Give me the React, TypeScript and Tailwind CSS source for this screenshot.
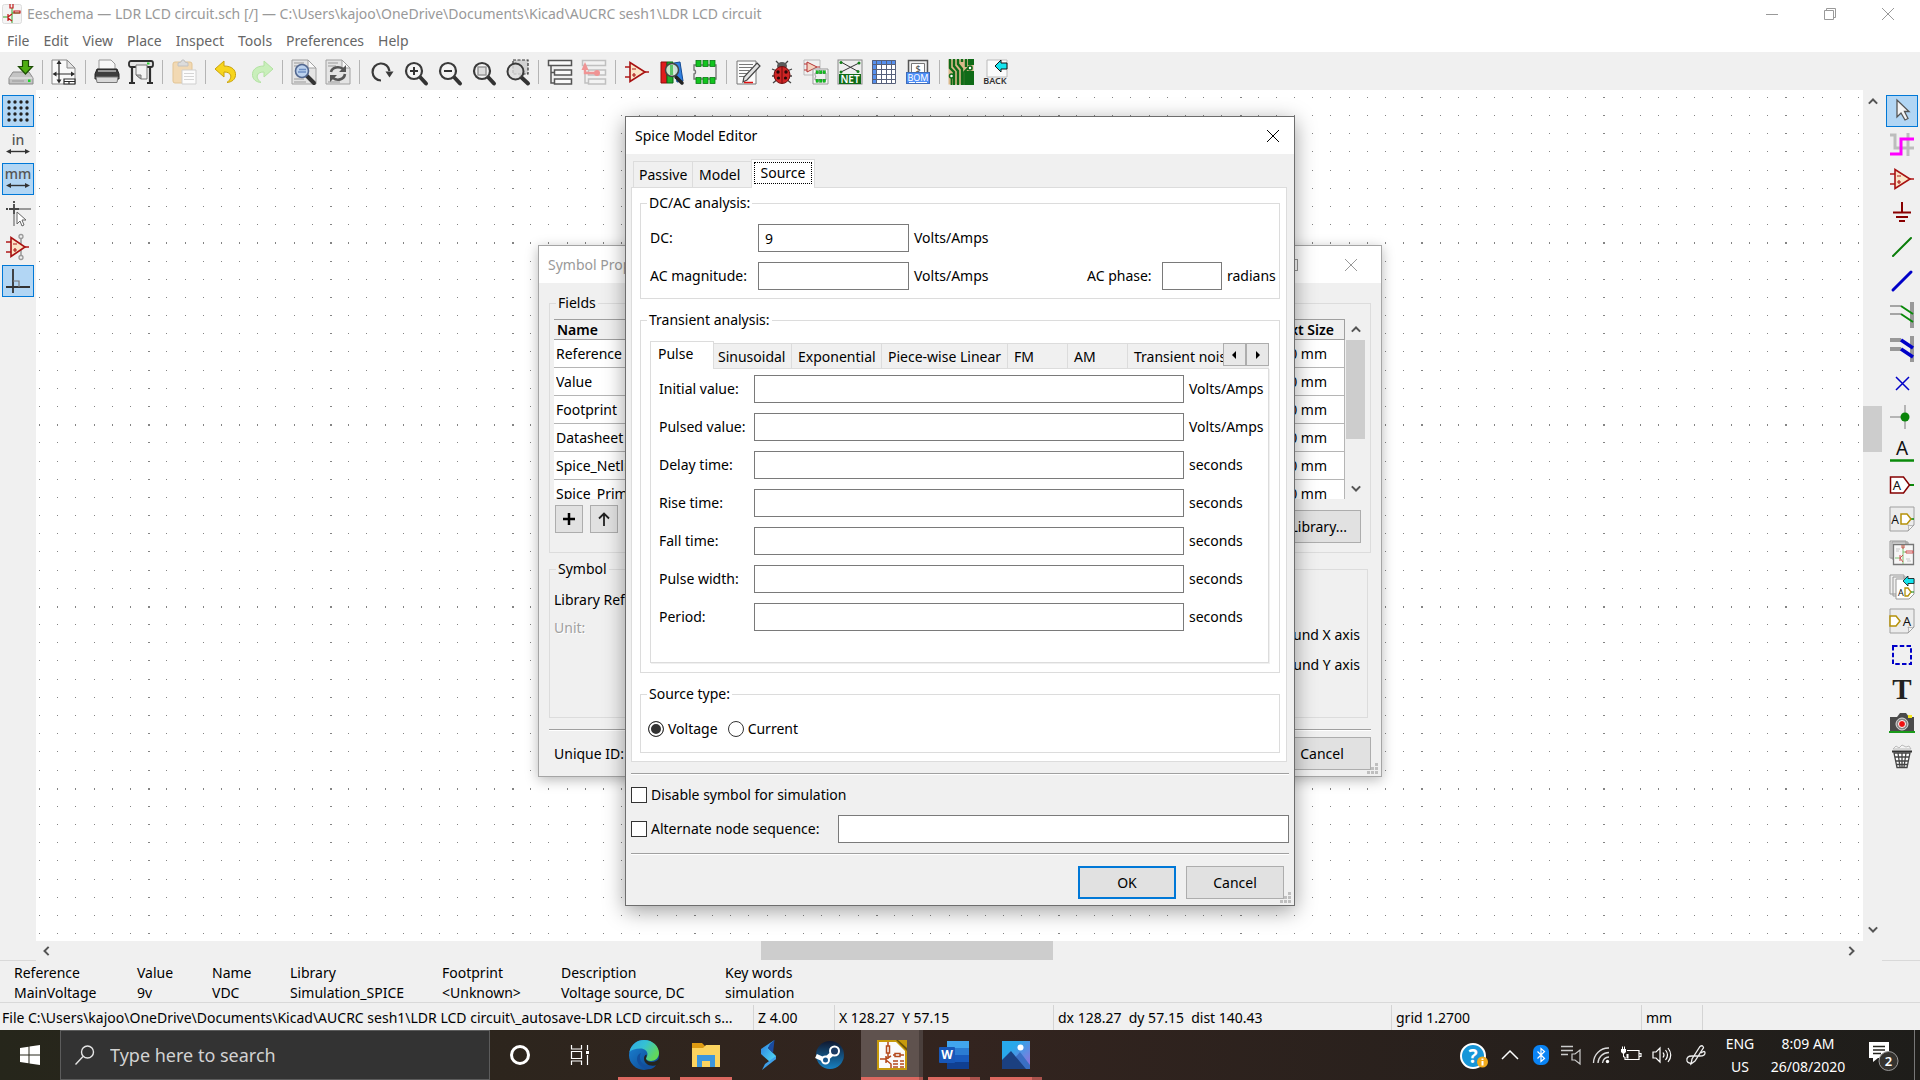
import type { ReactNode } from "react";

/* ---------- shared icon pieces ---------- */

function Icon({ children, className = "size-[26px]", box = "0 0 26 26" }: { children: ReactNode; className?: string; box?: string }) {
  return (
    <svg viewBox={box} className={`overflow-visible ${className}`} fill="none" aria-hidden="true">
      {children}
    </svg>
  );
}

const sans = '"Noto Sans", sans-serif';

const Magnifier = ({ children }: { children?: ReactNode }) => (
  <Icon>
    <path d="M18 18l6 6.500" stroke="#333" strokeWidth="4" strokeLinecap="round" />
    <circle cx="12" cy="12" r="8" fill="#f4f4f4" stroke="#3a3a3a" strokeWidth="2.200" />
    {children}
  </Icon>
);

const OpAmp = () => (
  <Icon>
    <path d="M1 8h5M1 18h5M20 13h5" stroke="#b01818" strokeWidth="1.500" />
    <path d="M6 3.500v19L21 13z" fill="#fae6c8" stroke="#a81212" strokeWidth="1.600" />
    <path d="M8 10h4M8 16h4M10 14v4" stroke="#b01818" strokeWidth="1.200" />
  </Icon>
);

const Sheet = ({ children }: { children?: ReactNode }) => (
  <>
    <path d="M1 1h16l8 8v16H1z" fill="#e4e4e4" stroke="#a0a0a0" />
    <path d="M17 1v8h8z" fill="#fafafa" stroke="#a0a0a0" />
    {children}
  </>
);

const SheetCurl = ({ children }: { children?: ReactNode }) => (
  <>
    <path d="M1 1h24v18l-6 6H1z" fill="#ececec" stroke="#a0a0a0" />
    <path d="M19 25c1-2 1-4 0-6 2 1 4 1 6 0z" fill="#fff" stroke="#999" strokeWidth=".8" />
    {children}
  </>
);

const Pins = ({ x, y, s }: { x: number; y: number; s: number }) => (
  <g transform={`translate(${x} ${y}) scale(${s})`}>
    <path d="M2 6v5c2 0 2 4 0 4v5h22V6z" fill="#f0f0f0" stroke="#777" strokeWidth="1.400" />
    {[4, 11, 18].map((px) => (
      <g key={px} fill="#12c41f" stroke="#0a7a14" strokeWidth=".8">
        <rect x={px} y="1.500" width="5" height="6" />
        <rect x={px} y="18.500" width="5" height="6" />
      </g>
    ))}
  </g>
);

/* ---------- top toolbar ---------- */

const SaveIcon = () => (
  <Icon>
    <path d="M5 13h16l4 6v6H1v-6z" fill="#c4c4c4" stroke="#8a8a8a" />
    <path d="M1.500 19h23" stroke="#efefef" />
    <path d="M4 22h12" stroke="#9a9a9a" />
    <path d="M20 20.500h2.500v2.500H20z" fill="#1bd52b" />
    <path d="M14.500 1.500h6v6h4L17.500 15l-7-7.500h4z" fill="#4fae12" stroke="#1d4d05" strokeWidth="1.200" />
  </Icon>
);
const PageIcon = () => (
  <Icon>
    <path d="M1 1h15l8 8v16H1z" fill="#fafafa" stroke="#888" />
    <path d="M16 1v8h8z" fill="#e4e4e4" stroke="#888" />
    <path d="M8 3v20M3 15h19" stroke="#2a2a2a" strokeWidth="1.200" />
    <path d="M8 1l2.500 4h-5zM8 24.500l2.500-4h-5zM1.500 15l4-2.500v5zM24 15l-4-2.500v5z" fill="#2a2a2a" />
    <path d="M13 20h11v5H13zM13 22.500h11M18 22.500v2.500" stroke="#2a2a2a" fill="#fff" strokeWidth="1.200" />
  </Icon>
);
const PrintIcon = () => (
  <Icon>
    <path d="M5 11V1h12l4 4v6z" fill="#f7f7f7" stroke="#999" />
    <path d="M3 10h20l2 5v5H1v-5z" fill="#3d3d3d" stroke="#222" />
    <path d="M4 12h18" stroke="#999" strokeWidth="2" />
    <path d="M2 18h22l-1 5.500H3z" fill="#d8d8d8" stroke="#777" />
  </Icon>
);
const PlotIcon = () => (
  <Icon>
    <path d="M4 7v17M22 7v17M1 24h6M19 24h6" stroke="#2f2f2f" strokeWidth="2.200" />
    <rect x="1" y="2" width="24" height="6" rx="2" fill="#e4e4e4" stroke="#2f2f2f" strokeWidth="1.800" />
    <path d="M19 4.500h2.500" stroke="#28c62e" strokeWidth="2" />
    <path d="M8 6h11v14h-6l-5-4z" fill="#f2f2f2" stroke="#777" />
    <path d="M8 16h5v4z" fill="#bbb" stroke="#777" />
  </Icon>
);
const PasteIcon = () => (
  <Icon>
    <rect x="2" y="3" width="19" height="21" rx="2" fill="#f2d9b3" stroke="#e3c595" />
    <path d="M7 7V4l3-1 1-2h2l1 2 3 1v3z" fill="#dcdcdc" stroke="#c2c2c2" />
    <path d="M11 11h14v14H11z" fill="#fcfcfc" stroke="#cfcfcf" />
    <path d="M13 14.500h10M13 17.500h10M13 20.500h10" stroke="#d5d5d5" />
  </Icon>
);
const ArrowBack = ({ redo = false }: { redo?: boolean }) => (
  <Icon>
    <path
      d="M1 10l9-8v5c8 0 12 4 11.500 9.500-.5 4-3.500 6.500-8.500 7 3-2.500 4.500-5 3.500-7.500-.8-2-3-3-6.500-3v5z"
      transform={redo ? "matrix(-1 0 0 1 26 0)" : undefined}
      fill={redo ? "#c9efbb" : "#f7d51d"}
      stroke={redo ? "#b2e2a2" : "#c9a20b"}
    />
  </Icon>
);
const FindIcon = () => (
  <Icon>
    <Sheet />
    <path d="M3 4h10M3 7h3M3 20h10M3 23h12" stroke="#999" />
    <path d="M16 17l7 7" stroke="#333" strokeWidth="4" strokeLinecap="round" />
    <circle cx="11" cy="12" r="6.500" fill="#bcd2ee" stroke="#52678f" strokeWidth="1.600" />
    <path d="M8 10.500h7M7 13h8" stroke="#6d8fc4" strokeWidth="1.300" />
  </Icon>
);
const ReplaceIcon = () => (
  <Icon>
    <Sheet />
    <path d="M3 4h10M3 7h8M3 23h12" stroke="#999" />
    <path d="M6 13c1-5 8-6 12-3M20 15c-1 6-8 7-12 4" stroke="#555" strokeWidth="2.600" />
    <path d="M21 6v7h-7zM5 23v-7h7z" fill="#555" />
  </Icon>
);
const RefreshIcon = () => (
  <Icon>
    <path d="M13 21.500A8.500 8.500 0 1 1 21.500 12" stroke="#3a3a3a" strokeWidth="2.200" />
    <path d="M17.500 12.500h8l-4 6z" fill="#3a3a3a" />
  </Icon>
);
const ZoomAreaIcon = () => (
  <Icon>
    <rect x="9" y="1" width="15" height="14" fill="#d2d2d2" stroke="#333" strokeDasharray="3 1.500" strokeWidth="1.200" />
    <path d="M17 18l7 6.500" stroke="#333" strokeWidth="4" strokeLinecap="round" />
    <circle cx="11.500" cy="12.500" r="8" fill="#dcdcdc" fillOpacity=".8" stroke="#3a3a3a" strokeWidth="2" />
  </Icon>
);
const HierarchyIcon = ({ leave = false }: { leave?: boolean }) => (
  <Icon>
    <g opacity={leave ? 0.3 : 1}>
      <path d="M4 6v18h4M4 13.500h4" stroke="#555" strokeWidth="1.500" />
      <path d="M1.500 1.500h23v5h-23zM7.500 11h17v5h-17zM7.500 20h17v5h-17z" fill="#fafafa" stroke="#555" strokeWidth="1.500" />
    </g>
    {leave && (
      <g>
        <path d="M4 9v5h12" stroke="#f09494" strokeWidth="2.400" />
        <path d="M4 3l3.500 8h-7z" fill="#f09494" />
        <circle cx="16" cy="14" r="3" fill="#f09494" />
      </g>
    )}
  </Icon>
);
const LibraryIcon = () => (
  <Icon>
    <path d="M3 3h6v21H3z" fill="#e01b1b" stroke="#8d0b0b" />
    <path d="M9 3h6v21H9z" fill="#1fae2d" stroke="#0a6614" />
    <path d="M16 4l6-1 3 19-6 1z" fill="#2f7fe0" stroke="#134a95" />
    <path d="M18 18l6 6" stroke="#222" strokeWidth="3.500" strokeLinecap="round" />
    <circle cx="14" cy="11" r="6.500" fill="#d9ecd9" fillOpacity=".9" stroke="#444" strokeWidth="1.500" />
    <path d="M12 6h3v10h-3z" fill="#5bc568" />
  </Icon>
);
const AnnotateIcon = () => (
  <Icon>
    <path d="M2 2h19v23H2z" fill="#fbfbfb" stroke="#777" />
    <path d="M4 5.500h14M4 8.500h13M4 11.500h10M4 14.500h8M4 17.500h5" stroke="#777" />
    <path d="M22 4l3 3-13 14-4 2 1-5z" fill="#e2e2e2" stroke="#444" strokeWidth="1.200" />
    <path d="M9 23.500h9" stroke="#e01212" strokeWidth="1.500" />
  </Icon>
);
const BugIcon = () => (
  <Icon>
    <path d="M7 2l4 4M19 2l-4 4M3 10l5 2M23 10l-5 2M3 17h5M23 17h-5M4 24l5-4M22 24l-5-4" stroke="#444" strokeWidth="1.300" />
    <ellipse cx="13" cy="7" rx="5" ry="4" fill="#5a5a5a" />
    <ellipse cx="13" cy="16" rx="8" ry="8.500" fill="#cf2424" stroke="#6e0d0d" />
    <path d="M13 8v16" stroke="#6e0d0d" />
    <g fill="#2a0808">
      <circle cx="9" cy="13" r="1.700" />
      <circle cx="17" cy="13" r="1.700" />
      <circle cx="9.500" cy="19" r="1.600" />
      <circle cx="16.500" cy="19" r="1.600" />
    </g>
  </Icon>
);
const AssignIcon = () => (
  <Icon>
    <path d="M1 1h16v15H1z" fill="#f0f0f0" stroke="#bbb" />
    <path d="M4 3v10l10-5zM1 5h3M1 11h3M14 8h3" fill="#f3d2c0" stroke="#b53232" />
    <path d="M10 10h15v15H10z" fill="#f7f7f7" stroke="#999" />
    <Pins x={11} y={11} s={0.5} />
  </Icon>
);
const NetIcon = () => (
  <Icon>
    <rect x="1" y="1" width="24" height="24" fill="#efefef" stroke="#888" />
    <path d="M4 3l18 10M4 13L22 4" stroke="#333" />
    <g fill="#138018">
      <circle cx="4" cy="3.500" r="1.500" />
      <circle cx="22" cy="4" r="1.500" />
      <circle cx="4" cy="13" r="1.500" />
      <circle cx="21" cy="12.500" r="1.500" />
    </g>
    <rect x="2" y="15" width="22" height="10" fill="#0f6b17" />
    <text x="13" y="23.500" textAnchor="middle" fill="#fff" fontSize="10" fontWeight="600" fontFamily={sans}>NET</text>
  </Icon>
);
const TableIcon = () => (
  <Icon>
    <path d="M1 1h24v24H1z" fill="#fff" />
    <path d="M1 1h24v4H1zM1 1h4v24H1z" fill="#5690ee" />
    <path d="M1.500 1.500h23v23h-23zM5.500 1v24M10.500 1v24M15.500 1v24M20.500 1v24M1 5.500h24M1 10.500h24M1 15.500h24M1 20.500h24" stroke="#56607a" />
  </Icon>
);
const BomIcon = () => (
  <Icon>
    <path d="M3.500 1.500h19V14h-19z" fill="#eee" stroke="#555" strokeWidth="1.500" />
    <path d="M6.500 4.500h13V14h-13z" fill="#fff" stroke="#777" />
    <text x="13" y="12.500" textAnchor="middle" fill="#444" fontSize="9" fontFamily={sans}>$</text>
    <rect x="1.500" y="13.500" width="23" height="11" fill="#4f8ff7" stroke="#3f6cb8" />
    <text x="13" y="22" textAnchor="middle" fill="#fff" fontSize="9" fontFamily={sans}>BOM</text>
    <path d="M4 23.500h6M11 23.500h11" stroke="#fff" />
  </Icon>
);
const PcbIcon = () => (
  <Icon>
    <rect x=".5" y=".5" width="25" height="25" fill="#d9b88a" />
    <path d="M2 0v9l4 4v13M6 0v7l4 5v14M10 0v5l4 5v16M18 0v8M14 0v3" stroke="#0f6b17" strokeWidth="2.400" />
    <path d="M17 12h9v14h-9zM20 0h6v6h-6z" fill="#0f6b17" />
    <circle cx="22" cy="9" r="2" fill="#fff" stroke="#0f6b17" strokeWidth="1.500" />
    <circle cx="3.500" cy="17" r="2" fill="#fff" stroke="#0f6b17" strokeWidth="1.500" />
    <path d="M3.500 19v7M16 26V13l4-4" stroke="#0f6b17" strokeWidth="1.800" />
  </Icon>
);
const BackIcon = () => (
  <Icon>
    <path d="M5 1h20v17H5z" fill="#fbfbfb" stroke="#bbb" />
    <path d="M13 7l6-6v3h6v6h-6v3z" fill="#14e4ee" stroke="#111" />
    <text x="13" y="25" textAnchor="middle" fill="#333" fontSize="9" fontWeight="600" fontFamily={sans}>BACK</text>
  </Icon>
);

type Tool = [string, ReactNode];
const topTools: (Tool | null)[] = [
  ["Save", <SaveIcon />], null,
  ["Page settings", <PageIcon />], null,
  ["Print", <PrintIcon />], ["Plot", <PlotIcon />], null,
  ["Paste", <PasteIcon />], null,
  ["Undo", <ArrowBack />], ["Redo", <ArrowBack redo />], null,
  ["Find", <FindIcon />], ["Find and replace", <ReplaceIcon />], null,
  ["Refresh", <RefreshIcon />],
  ["Zoom in", <Magnifier><path d="M12 8v8M8 12h8" stroke="#333" strokeWidth="2" /></Magnifier>],
  ["Zoom out", <Magnifier><path d="M8 12h8" stroke="#333" strokeWidth="2" /></Magnifier>],
  ["Zoom to fit", <Magnifier><path d="M8 8h8v8H8z" fill="#ddd" stroke="#999" strokeWidth="1.500" /></Magnifier>],
  ["Zoom to selection", <ZoomAreaIcon />], null,
  ["Hierarchy", <HierarchyIcon />], ["Leave sheet", <HierarchyIcon leave />], null,
  ["Symbol editor", <OpAmp />], ["Library browser", <LibraryIcon />],
  ["Footprint editor", <Icon><Pins x={0} y={0} s={1} /></Icon>], null,
  ["Annotate", <AnnotateIcon />], ["Electrical rules check", <BugIcon />], ["Assign footprints", <AssignIcon />],
  ["Netlist", <NetIcon />], ["Symbol fields", <TableIcon />], ["Bill of materials", <BomIcon />], null,
  ["Open PCB", <PcbIcon />], ["Back import", <BackIcon />],
];

/* ---------- left toolbar ---------- */

const UnitIcon = ({ unit }: { unit: string }) => (
  <Icon>
    <text x="13" y="13" textAnchor="middle" fill="#555" fontSize="14" fontWeight="500" fontFamily={sans}>{unit}</text>
    <path d="M4 19.500h18" stroke="#333" strokeWidth="1.400" />
    <path d="M1 19.500l5-2.500v5zM25 19.500l-5-2.500v5z" fill="#333" />
  </Icon>
);
const leftTools: [string, ReactNode, boolean][] = [
  ["Show grid", <Icon>{[4, 10, 16, 22].map((y) => [4, 10, 16, 22].map((x) => <circle key={`${x}-${y}`} cx={x} cy={y} r="1.700" fill="#222" />))}</Icon>, true],
  ["Inches", <UnitIcon unit="in" />, false],
  ["Millimeters", <UnitIcon unit="mm" />, true],
  ["Cursor shape", <Icon><path d="M9 14v12M14 9h12" stroke="#999" strokeWidth="1.800" /><path d="M9 1v2M1 9h2M4 9h10M9 4v10" stroke="#444" strokeWidth="1.800" /><path d="M12 12v12l3-3 2 5 2-1-2-5h4z" fill="#fff" stroke="#666" /></Icon>, false],
  ["Hidden pins", <Icon><path d="M16 4v18" stroke="#999" strokeWidth="1.500" /><circle cx="16" cy="2.500" r="2" stroke="#999" strokeWidth="1.300" /><circle cx="16" cy="23.500" r="2" stroke="#999" strokeWidth="1.300" /><path d="M1 8h5M1 18h5M20 13h4" stroke="#b01818" strokeWidth="1.500" /><path d="M6 3.500v19L20 13z" fill="#fae6c8" stroke="#a81212" strokeWidth="1.600" /><path d="M8 10h4M8 16h4M10 14v4" stroke="#b01818" strokeWidth="1.200" /></Icon>, false],
  ["Orthogonal lines", <Icon><path d="M8 1v24M1 19h24" stroke="#333" strokeWidth="1.800" /><path d="M8 13h6v6" stroke="#777" strokeWidth="1.200" /></Icon>, true],
];

/* ---------- right toolbar ---------- */

const Glyph = ({ x, y, size }: { x: number; y: number; size: number }) => (
  <text x={x} y={y} textAnchor="middle" fill="#111" fontSize={size} fontFamily={sans}>A</text>
);
const rightTools: Tool[] = [
  ["Select", <Icon><path d="M8 2v17l4-4 4 7 3-1.500-3.500-7H20z" fill="#f4f4f4" stroke="#555" strokeWidth="1.300" /></Icon>],
  ["Highlight net", <Icon><path d="M1 3h5v13h19M19 1v23" stroke="#bdbdbd" strokeWidth="3" /><path d="M1 22h11V7h13" stroke="#ff00ff" strokeWidth="3" /></Icon>],
  ["Place symbol", <OpAmp />],
  ["Place power", <Icon><path d="M13 2v10" stroke="#800" strokeWidth="2" /><path d="M4 12.500h18M7 17h12M10 21h6" stroke="#800" strokeWidth="2.200" /></Icon>],
  ["Wire", <Icon><path d="M4 22L22 4" stroke="#0a7d0a" strokeWidth="2" strokeLinecap="round" /></Icon>],
  ["Bus", <Icon><path d="M4 22L22 4" stroke="#0000c8" strokeWidth="3" strokeLinecap="round" /></Icon>],
  ["Wire entry", <Icon><path d="M23 0v26" stroke="#999" strokeWidth="4" /><path d="M1 4h11M1 12h11" stroke="#a5a5a5" strokeWidth="2" /><path d="M12 4l12 8M12 12l12 8" stroke="#0a8a0a" strokeWidth="2" /></Icon>],
  ["Bus entry", <Icon><path d="M23 0v26" stroke="#999" strokeWidth="4" /><path d="M1 4h11M1 13h11" stroke="#999" strokeWidth="4" /><path d="M12 4l12 8M12 13l12 8" stroke="#0000c8" strokeWidth="3.500" /></Icon>],
  ["No connect", <Icon><path d="M7 7l13 13M20 7L7 20" stroke="#0000c8" strokeWidth="1.500" /></Icon>],
  ["Junction", <Icon><path d="M1 13h14M16 1v24" stroke="#b5b5b5" strokeWidth="2" /><circle cx="16" cy="13" r="4.500" fill="#0a850a" /></Icon>],
  ["Net label", <Icon><Glyph x={13} y={17} size={19} /><path d="M1 22.500h24" stroke="#0a8a0a" strokeWidth="2.500" /></Icon>],
  ["Global label", <Icon><path d="M20 13h5" stroke="#0a8a0a" strokeWidth="2" /><path d="M1.500 5h13l6 8-6 8h-13z" fill="#fff" stroke="#850000" strokeWidth="1.500" /><Glyph x={8} y={18} size={13} /></Icon>],
  ["Hierarchical label", <Icon><SheetCurl /><path d="M22 13h3" stroke="#0a8a0a" strokeWidth="1.500" /><path d="M12 8h6l4 5-4 5h-6z" fill="#fff" stroke="#b5910a" strokeWidth="1.500" /><Glyph x={6} y={18} size={12} /></Icon>],
  ["Sheet", <Icon><path d="M1 1h16v17H1zM3 2h16v17H3z" fill="#e5e5e5" stroke="#999" /><path d="M4.500 4.500h20v20h-20z" fill="#f7f7f7" stroke="#777" strokeWidth="1.300" /><path d="M14 5v7h3M14 12v12M6 18h5" stroke="#7dc06f" /><path d="M13 5v3h2V5M17 11h7v2h-7zM11 15v6M11 18l3-3M11 18l3 4" stroke="#d05050" /><path d="M7 9h4M7 11h3M17 19h4M18 21h4" stroke="#bbb" strokeWidth=".8" /></Icon>],
  ["Import sheet pin", <Icon><path d="M1 1h14v19H1zM4 3h14v19H4z" fill="#f0f0f0" stroke="#999" /><path d="M7 5h18v15l-5 5H7z" fill="#fff" stroke="#999" /><path d="M14 7l5-5v2.500h6v5h-6V12z" fill="#14e4ee" stroke="#111" strokeWidth=".8" /><path d="M16 14h3l3 4-3 4h-3z" stroke="#b5910a" strokeWidth="1.300" /><path d="M22 18h3" stroke="#0a8a0a" /><Glyph x={12} y={22} size={9} /></Icon>],
  ["Sheet pin", <Icon><SheetCurl /><path d="M1 8h6l4 5-4 5H1z" fill="#fff" stroke="#b5910a" strokeWidth="1.500" /><Glyph x={18} y={18} size={13} /></Icon>],
  ["Graphic line", <Icon><path d="M4 4h18v18H4z" stroke="#0000c8" strokeWidth="2" strokeDasharray="4.500 2.250" /></Icon>],
  ["Text", <Icon><text x="13" y="23" textAnchor="middle" fill="#222" fontSize="29" fontWeight="600" fontFamily='"Liberation Serif", serif'>T</text></Icon>],
  ["Image", <Icon><path d="M1 7h7l3-4h6l3 4h5v15H1z" fill="#4a4a4a" /><path d="M19 5h4v3h-4z" fill="#f6e71d" /><circle cx="13" cy="14" r="6" fill="#888" stroke="#ddd" /><circle cx="13" cy="14" r="3.500" fill="#f01010" stroke="#fff" /><path d="M0 22h26" stroke="#1a9a1a" strokeWidth="2" /></Icon>],
  ["Delete", <Icon><path d="M4 5l3-3 3 2 3-3 4 2 3-1 2 3z" fill="#f4f4f4" stroke="#bbb" /><path d="M3 7.500h20" stroke="#333" strokeWidth="2" /><path d="M5 9h16l-3 14.500H8zM5.500 13h15M6.500 17h13M7 20.500h12M9 9l2 14M13 9v14M17 9l-2 14" fill="#fff" stroke="#444" strokeWidth="1.300" /></Icon>],
];

/* ---------- canvas grid ---------- */

const gridPath = (() => {
  const parts: string[] = [];
  for (let r = 0; r < 80; r++) {
    const h = r % 10 === 8 ? 2 : 1;
    const y = Math.floor(7.4 + r * 18.18);
    for (let c = 0; c < 160; c++) {
      const w = c % 10 === 6 ? 2 : 1;
      const x = Math.floor(3.5 + c * 18.19);
      parts.push(`M${x} ${y}h${w}v${h}h-${w}z`);
    }
  }
  return parts.join("");
})();

/* ---------- form parts ---------- */

function TextField({ id, className, value = "" }: { id: string; className: string; value?: string }) {
  return <input id={id} type="text" defaultValue={value} className={`h-7 min-w-0 border border-[#7a7a7a] bg-white px-1.5 outline-none ${className}`} />;
}

function Group({ title, className = "", inner, children }: { title: string; className?: string; inner: string; children: ReactNode }) {
  return (
    <fieldset className={`min-w-0 border border-[#dcdcdc] ${className}`}>
      <legend className="ml-1.5 h-5 px-0.5">{title}</legend>
      <div className={inner}>{children}</div>
    </fieldset>
  );
}

function Rule({ className }: { className: string }) {
  return <div role="separator" className={`h-0.5 border-t border-b border-t-[#a0a0a0] border-b-white ${className}`} />;
}

function CloseMark({ color }: { color: string }) {
  return (
    <Icon className="size-3" box="0 0 12 12">
      <path d="M0 0l12 12M12 0L0 12" stroke={color} />
    </Icon>
  );
}

function Grip() {
  return (
    <Icon className="absolute right-[3px] bottom-[2px] size-[11px]" box="0 0 11 11">
      <path d="M8 0h3v3H8zM4 4h3v3H4zM8 4h3v3H8zM0 8h3v3H0zM4 8h3v3H4zM8 8h3v3H8z" fill="#bfbfbf" />
    </Icon>
  );
}

const chevrons = { up: "M1 8l5-5 5 5", down: "M1 4l5 5 5-5", left: "M8 1L3 6l5 5", right: "M4 1l5 5-5 5" };
function ScrollButton({ dir, className }: { dir: keyof typeof chevrons; className: string }) {
  return (
    <button aria-label={`Scroll ${dir}`} className={`flex items-center justify-center ${className}`}>
      <Icon className="size-[10px]" box="0 0 12 12">
        <path d={chevrons[dir]} stroke="#555" strokeWidth="2.400" />
      </Icon>
    </button>
  );
}

/* ---------- dialogs ---------- */

const fieldRows = ["Reference", "Value", "Footprint", "Datasheet", "Spice_Netlist_Enabled", "Spice_Primitive"];

function SymbolProperties() {
  return (
    <section aria-label="Symbol Properties" className="absolute inset-x-0 top-[245px] mx-auto w-[844px] border border-[#a5a5a5] bg-[#f0f0f0] shadow-[0_3px_12px_rgba(0,0,0,0.28)]">
      <header className="flex h-[37px] items-center bg-white pr-6 pl-[9px] text-[#999]">
        <h2 className="flex-1">Symbol Properties</h2>
        <button aria-label="Maximize" className="mr-[47px] size-3 border border-[#999]" />
        <button aria-label="Close"><CloseMark color="#999" /></button>
      </header>
      <div className="px-2.5 pt-2.5 pb-1.5">
        <Group title="Fields" inner="pt-1.5 pr-[5px] pb-[9px] pl-1">
          <div className="flex h-[180px]">
            <div className="flex-1 overflow-hidden">
              <table className="w-full border-collapse bg-white">
                <thead>
                  <tr className="h-5 border-y border-[#a0a0a0] bg-[#f0f0f0] leading-[19px]">
                    <th className="pl-[3px] text-left font-semibold">Name</th>
                    <th className="border-r border-[#a0a0a0] pr-2.5 text-right font-semibold">Text Size</th>
                  </tr>
                </thead>
                <tbody>
                  {fieldRows.map((name) => (
                    <tr key={name} className="h-7 border-b border-[#b5b5b5]">
                      <td className="pl-0.5"><div className="w-[90px] overflow-hidden">{name}</div></td>
                      <td className="border-r border-[#b5b5b5] pr-[17px] text-right">1.270 mm</td>
                    </tr>
                  ))}
                </tbody>
              </table>
            </div>
            <div className="flex w-5 flex-col pl-px">
              <ScrollButton dir="up" className="h-[21px]" />
              <div className="h-[99px] bg-[#cdcdcd]" />
              <ScrollButton dir="down" className="mt-auto h-[22px]" />
            </div>
          </div>
          <div className="mt-1.5 flex h-[38px] items-start gap-[7px] pl-px">
            <button aria-label="Add field" className="flex size-7 items-center justify-center border border-[#adadad] bg-[#e1e1e1]">
              <Icon className="size-4" box="0 0 16 16"><path d="M8 2v12M2 8h12" stroke="#000" strokeWidth="2.500" /></Icon>
            </button>
            <button aria-label="Move field up" className="flex size-7 items-center justify-center border border-[#adadad] bg-[#e1e1e1]">
              <Icon className="size-4" box="0 0 16 16"><path d="M8 15V3M3 7.500l5-5 5 5" stroke="#222" strokeWidth="1.800" /></Icon>
            </button>
            <button aria-label="Update fields from library" className="mr-1 ml-auto h-[33px] w-[190px] self-end border border-[#adadad] bg-[#e1e1e1] pr-[13px] text-right">Library...</button>
          </div>
        </Group>
        <Group title="Symbol" className="mt-1.5 mr-[3px]" inner="pl-1">
          <div className="flex h-[138px] justify-between pr-[7px]">
            <div className="pt-[11px]">
              <p>Library Reference:</p>
              <p className="mt-2 text-[#a0a0a0] [text-shadow:1px_1px_0_#fff]">Unit:</p>
            </div>
            <div className="pt-[46px] text-right">
              <p>Mirror around X axis</p>
              <p className="mt-2.5">Mirror around Y axis</p>
            </div>
          </div>
        </Group>
        <Rule className="mt-[11px]" />
        <div className="mt-1.5 flex items-center justify-between pl-[5px]">
          <span>Unique ID:</span>
          <button className="h-[33px] w-[98px] border border-[#adadad] bg-[#e1e1e1]">Cancel</button>
        </div>
      </div>
      <Grip />
    </section>
  );
}

const pulseRows: [string, string, string][] = [
  ["initial", "Initial value:", "Volts/Amps"],
  ["pulsed", "Pulsed value:", "Volts/Amps"],
  ["delay", "Delay time:", "seconds"],
  ["rise", "Rise time:", "seconds"],
  ["fall", "Fall time:", "seconds"],
  ["width", "Pulse width:", "seconds"],
  ["period", "Period:", "seconds"],
];

const transientTabs: [string, string][] = [
  ["Sinusoidal", "w-[78px] pl-1"],
  ["Exponential", "w-[90px] pl-1.5"],
  ["Piece-wise Linear", "w-[126px] pl-1.5"],
  ["FM", "w-[60px] pl-1.5"],
  ["AM", "w-[60px] pl-1.5"],
  ["Transient noise", "w-[115px] pl-1.5"],
];

function Radio({ label, checked = false }: { label: string; checked?: boolean }) {
  return (
    <label className="flex items-center gap-1">
      <input
        type="radio"
        name="source-type"
        defaultChecked={checked}
        className="size-4 appearance-none rounded-full border border-[#333] bg-white checked:bg-[#333] checked:shadow-[inset_0_0_0_2px_#fff]"
      />
      {label}
    </label>
  );
}

function SpiceModelEditor() {
  return (
    <section role="dialog" aria-label="Spice Model Editor" className="absolute inset-x-0 top-[116px] mx-auto w-[670px] border border-[#6e6e6e] bg-[#f0f0f0] shadow-[0_5px_20px_rgba(0,0,0,0.38)]">
      <header className="flex h-[37px] items-center justify-between bg-white pr-[15px] pl-[9px]">
        <h2>Spice Model Editor</h2>
        <button aria-label="Close"><CloseMark color="#000" /></button>
      </header>
      <div className="px-[5px] pt-[5px] pb-1.5">
        <div role="tablist" className="flex h-7 items-end pl-0.5">
          <button role="tab" className="h-[26px] w-[59px] border-t border-l border-[#dcdcdc] pl-[5px] text-left">Passive</button>
          <button role="tab" className="h-[26px] w-[59px] border-t border-l border-[#dcdcdc] pl-1.5 text-left">Model</button>
          <button role="tab" aria-selected="true" className="z-10 -mb-px h-[29px] w-16 border border-b-0 border-[#dcdcdc] bg-white px-0.5 pt-0.5 pb-1">
            <span className="flex h-full items-center justify-center border border-dotted border-black">Source</span>
          </button>
        </div>
        <div className="mr-0.5 border border-[#dcdcdc] bg-white pt-[5px] pr-1.5 pb-2 pl-2">
          <Group title="DC/AC analysis:" inner="pt-[11px] pr-1 pb-2 pl-[9px]">
            <div className="flex items-center">
              <label htmlFor="dc" className="w-[108px]">DC:</label>
              <TextField id="dc" value="9" className="w-[151px]" />
              <span className="ml-[5px]">Volts/Amps</span>
            </div>
            <div className="mt-2.5 flex items-center">
              <label htmlFor="ac-mag" className="w-[108px]">AC magnitude:</label>
              <TextField id="ac-mag" className="w-[151px]" />
              <span className="ml-[5px]">Volts/Amps</span>
              <label htmlFor="ac-phase" className="ml-auto w-[75px]">AC phase:</label>
              <TextField id="ac-phase" className="w-[60px]" />
              <span className="ml-[5px] w-12">radians</span>
            </div>
          </Group>

          <Group title="Transient analysis:" className="mt-[11px]" inner="pt-[11px] pr-2.5 pb-[9px] pl-[9px]">
            <div className="flex h-[27px] items-end">
              <div role="tablist" className="-mb-px flex h-7 flex-1 items-end overflow-hidden">
                <button role="tab" aria-selected="true" className="h-7 w-16 shrink-0 border border-b-0 border-[#dcdcdc] bg-white pb-1 pl-[7px] text-left">Pulse</button>
                {transientTabs.map(([name, size]) => (
                  <button key={name} role="tab" className={`h-[26px] shrink-0 overflow-hidden border-y border-r border-[#dcdcdc] bg-[#f0f0f0] pt-0.5 text-left whitespace-nowrap ${size}`}>
                    {name}
                  </button>
                ))}
              </div>
              <div className="flex h-[25px] items-start bg-[#f0f0f0]">
                <button aria-label="Previous tabs" className="flex h-[23px] w-[23px] items-center justify-center border border-[#adadad] bg-[#e8e8e8] pr-0.5">
                  <Icon className="size-2" box="0 0 8 8"><path d="M6 0v8L2 4z" fill="#000" /></Icon>
                </button>
                <button aria-label="Next tabs" className="flex h-[23px] w-[23px] items-center justify-center border border-[#adadad] bg-[#e8e8e8]">
                  <Icon className="size-2" box="0 0 8 8"><path d="M2 0v8l4-4z" fill="#000" /></Icon>
                </button>
              </div>
            </div>
            <div className="flex flex-col gap-2.5 border border-[#dcdcdc] pt-1.5 pb-[31px] pl-2 shadow-[1px_1px_0_#f0f0f0]">
              {pulseRows.map(([id, label, unit]) => (
                <div key={id} className="flex items-center">
                  <label htmlFor={id} className="w-[95px]">{label}</label>
                  <TextField id={id} className="flex-1" />
                  <span className="w-[84px] pl-[5px]">{unit}</span>
                </div>
              ))}
            </div>
          </Group>

          <Group title="Source type:" className="mt-[11px]" inner="pt-[15px] pb-[13px] pl-[7px]">
            <div className="flex gap-2.5">
              <Radio label="Voltage" checked />
              <Radio label="Current" />
            </div>
          </Group>
        </div>
        <Rule className="mt-[11px]" />
        <label className="mt-2.5 flex items-center gap-1">
          <input type="checkbox" className="size-4 appearance-none border border-[#333] bg-white" />
          Disable symbol for simulation
        </label>
        <div className="mt-2.5 flex items-center">
          <label className="flex w-[207px] items-center gap-1">
            <input type="checkbox" className="size-4 appearance-none border border-[#333] bg-white" />
            Alternate node sequence:
          </label>
          <input type="text" aria-label="Node sequence" className="h-7 min-w-0 flex-1 border border-[#7a7a7a] bg-white px-1.5" />
        </div>
        <Rule className="mt-2.5" />
        <div className="mt-[11px] flex justify-end gap-2.5 pr-[5px]">
          <button className="h-[33px] w-[98px] border-2 border-[#0078d7] bg-[#e1e1e1]">OK</button>
          <button className="h-[33px] w-[98px] border border-[#adadad] bg-[#e1e1e1]">Cancel</button>
        </div>
      </div>
      <Grip />
    </section>
  );
}

/* ---------- taskbar ---------- */

const EdgeIcon = () => (
  <Icon className="size-8" box="0 0 32 32">
    <defs>
      <linearGradient id="edge-top" x1="0" y1="0" x2="1" y2=".5">
        <stop offset="0" stopColor="#2fa8e6" />
        <stop offset=".5" stopColor="#35c1d4" />
        <stop offset="1" stopColor="#62d85a" />
      </linearGradient>
      <linearGradient id="edge-low" x1="0" y1="0" x2="1" y2="1">
        <stop offset="0" stopColor="#1b86d8" />
        <stop offset="1" stopColor="#0c3f86" />
      </linearGradient>
    </defs>
    <circle cx="16" cy="16" r="15" fill="url(#edge-low)" />
    <path d="M1.500 13C3 5.500 9 1 16 1c9 0 15 6.500 15 13 0 5-4 8-8 8-3 0-5-1-5-2.500 0-1 1.500-2 1.500-4.500 0-3-3-5.500-7-5.500-5 0-9 1.500-11 3.500z" fill="url(#edge-top)" />
    <path d="M13 14c-3 5 0 13 9 13 3 0 5-1 7-2.500-1 2-3 4.500-6 5.500-7 1-14-4-14-10 0-3 2-5.500 4-6z" fill="#124f9d" />
    <path d="M18 19.500c0 2 3 3.500 6 3.500 3.500 0 6-2 8-4v4l-3 3c-6 2-13-.5-13-6.500 0-2 1-3.500 2.500-4 .5 2-.5 3-.5 4z" fill="#25241f" />
  </Icon>
);
const FolderIcon = () => (
  <Icon className="size-8" box="0 0 32 32">
    <path d="M2 4h10l3 3v4H2z" fill="#dd9a12" />
    <path d="M2 9h11l3-3h14v22H2z" fill="#fbd35f" />
    <path d="M7 28V16h18v12h-5v-6h-8v6z" fill="#3c96dd" />
  </Icon>
);
const BoltIcon = () => (
  <Icon className="size-8" box="0 0 32 32">
    <defs>
      <linearGradient id="bolt" x1="0" y1="0" x2="1" y2="1">
        <stop offset="0" stopColor="#2a7be0" />
        <stop offset="1" stopColor="#52dff5" />
      </linearGradient>
    </defs>
    <path d="M22.500 1L9 10v5l9 8 6-3v-3l-8-8z" fill="url(#bolt)" />
    <path d="M22.500 1L18 5l-2 4 5 5z" fill="#1a4ba0" />
    <path d="M10 31l14-11v-3l-11 8z" fill="#3f9fe8" />
  </Icon>
);
const SteamIcon = () => (
  <Icon className="size-8" box="0 0 32 32">
    <defs>
      <linearGradient id="steam" x1="0" y1="0" x2="0" y2="1">
        <stop offset="0" stopColor="#10182f" />
        <stop offset="1" stopColor="#1781c2" />
      </linearGradient>
    </defs>
    <circle cx="16" cy="16" r="14" fill="url(#steam)" />
    <path d="M2 17l9 4 9-8" stroke="#fff" strokeWidth="4.500" />
    <circle cx="20.500" cy="12" r="4.500" fill="#1a3a63" stroke="#fff" strokeWidth="2" />
    <circle cx="11.500" cy="21" r="3.500" fill="#17558a" stroke="#fff" strokeWidth="2" />
  </Icon>
);
const KicadIcon = () => (
  <Icon className="size-8" box="0 0 32 32">
    <path d="M1 1h30v30H1z" fill="#c79a0c" />
    <path d="M3 3h17l9 9v17H3z" fill="#fafafa" />
    <path d="M20 1h2l9 8v3z" fill="#6e5505" />
    <path d="M12 3v4M10.500 7h3v7h-3zM12 14v6M4 20h6M10 17v7M10 20l5-3M10 21l5 4v4M17 16h2M19 14.500h5v3h-5zM24 16h4" stroke="#b54a1c" strokeWidth="1.500" />
    <path d="M17 22h5M24 22h4M17 25h5M24 25h4M17 28h5M24 28h4" stroke="#b54a1c" strokeWidth="1.600" />
  </Icon>
);
const WordIcon = () => (
  <Icon className="size-8" box="0 0 32 32">
    <path d="M9 2h22v7H9z" fill="#41a5ee" />
    <path d="M9 9h22v7H9z" fill="#2b7cd3" />
    <path d="M9 16h22v7H9z" fill="#185abd" />
    <path d="M9 23h22v7H9z" fill="#103f91" />
    <rect x="1" y="8" width="16" height="16" rx="1" fill="#1857b8" />
    <text x="9" y="20" textAnchor="middle" fill="#fff" fontSize="12" fontWeight="700" fontFamily={sans}>W</text>
  </Icon>
);
const PhotosIcon = () => (
  <Icon className="size-8" box="0 0 32 32">
    <defs>
      <linearGradient id="sky" x1="0" y1="0" x2="1" y2="1">
        <stop offset=".3" stopColor="#28a8ea" />
        <stop offset="1" stopColor="#a06bd8" />
      </linearGradient>
    </defs>
    <path d="M2 2h28v28H2z" fill="url(#sky)" />
    <path d="M14 20l6-7 10 13v4H14z" fill="#3a6fc4" />
    <path d="M2 21l9-9 15 18H2z" fill="#1b4080" />
    <circle cx="20.500" cy="8.500" r="3" fill="#fff" />
  </Icon>
);

const apps: [string, ReactNode, "none" | "single" | "stack" | "active"][] = [
  ["Microsoft Edge", <EdgeIcon />, "single"],
  ["File Explorer", <FolderIcon />, "single"],
  ["Smart app", <BoltIcon />, "none"],
  ["Steam", <SteamIcon />, "none"],
  ["Eeschema", <KicadIcon />, "active"],
  ["Word", <WordIcon />, "stack"],
  ["Photos", <PhotosIcon />, "stack"],
];

const trayIcons: [string, string, ReactNode][] = [
  ["Show hidden icons", "w-9", <Icon className="size-4" box="0 0 16 16"><path d="M0 12l8-8 8 8" stroke="#fff" strokeWidth="1.500" /></Icon>],
  ["Bluetooth", "w-[26px]", <Icon className="h-5 w-4" box="0 0 16 20"><rect width="16" height="20" rx="6.500" fill="#0a84f5" /><path d="M4.500 6.500l7 7L8 16.500v-13l3.500 3-7 7" stroke="#fff" strokeWidth="1.200" /></Icon>],
  ["Audio devices", "w-[34px]", <Icon className="size-5" box="0 0 20 20"><path d="M0 1.500h12M0 5.500h12M0 9.500h7" stroke="#ccc" strokeWidth="1.300" /><path d="M11 9h3l5-4v14l-5-4h-3z" stroke="#ccc" strokeWidth="1.200" /></Icon>],
  ["Wi-Fi", "w-7", <Icon className="size-5" box="0 0 20 20"><path d="M1.500 18A15 15 0 0 1 17 3M6 18A11 11 0 0 1 17 7.500M10.500 18a7 7 0 0 1 6.500-6" stroke="#ddd" strokeWidth="1.300" /><circle cx="15.500" cy="16.500" r="1.700" fill="#fff" /></Icon>],
  ["Battery", "w-[30px]", <Icon className="size-5" box="0 0 20 20"><path d="M6 5.500h12v9H4V12M18 8.500h2v3h-2" stroke="#fff" strokeWidth="1.200" /><path d="M5.500 9h2v4.500h-2zM0 4h5v3l-1.500 1.500h-2L0 7z" fill="#fff" /><path d="M1.500 1.500V4M3.500 1.500V4M2.500 8v4H4" stroke="#fff" /></Icon>],
  ["Volume", "w-[31px]", <Icon className="size-5" box="0 0 20 20"><path d="M1 7h3l4-4v14l-4-4H1z" stroke="#fff" strokeWidth="1.200" /><path d="M11 7.500q2 2.500 0 5M13.500 5q4 5 0 10M16 3q5.500 7 0 14" stroke="#fff" strokeWidth="1.200" /></Icon>],
  ["Pen", "w-[38px]", <Icon className="size-5" box="0 0 20 20"><path d="M5 19l1-5L14 1.500q2-1.500 3 0t0 2L9 16zM1 16q-1-5 5-5h8q5 0 5-3t-4 0M1 16q1 3 5 2" stroke="#eee" strokeWidth="1.300" /></Icon>],
];

function Taskbar() {
  return (
    <footer className="flex h-[50px] bg-linear-to-r from-[#26261b] via-[#33241f] to-[#1e1d1a] text-white">
      <button aria-label="Start" className="flex w-[60px] items-center justify-center">
        <Icon className="size-5" box="0 0 20 20"><path d="M0 3l8.500-1.200v7.700H0zM9.500 1.600L20 0v9.500H9.500zM0 10.500h8.500v7.700L0 17zM9.500 10.500H20V20L9.500 18.400z" fill="#fff" /></Icon>
      </button>
      <label className="flex w-[430px] items-center gap-[15px] border border-[#5c5c5c] bg-[#333] pl-3.5">
        <Icon className="size-5" box="0 0 20 20"><circle cx="12.500" cy="7" r="6" stroke="#e6e6e6" strokeWidth="1.400" /><path d="M8 11.500L.5 19.500" stroke="#e6e6e6" strokeWidth="1.400" /></Icon>
        <input type="search" aria-label="Search" placeholder="Type here to search" className="min-w-0 flex-1 bg-transparent text-lg text-white outline-none placeholder:text-[#d2d2d2]" />
      </label>
      <button aria-label="Cortana" className="flex w-[60px] items-center justify-center">
        <span className="size-5 rounded-full border-3 border-white" />
      </button>
      <button aria-label="Task view" className="mr-[3px] flex w-[60px] items-center justify-center">
        <Icon className="size-5" box="0 0 20 20"><path d="M1.500 0v4h10V0M1.500 20v-4h10v4M1.500 6.500h10v7h-10zM17.500 0v5M17.500 10v10" stroke="#fff" strokeWidth="1.200" /><path d="M16 6h3v3h-3z" fill="#fff" /></Icon>
      </button>
      {apps.map(([name, icon, state]) => (
        <button key={name} aria-label={name} className={`relative flex w-[62px] items-center justify-center ${state === "active" ? "bg-[#5f524e]" : ""}`}>
          {icon}
          {state === "active" && <span className="absolute inset-y-0 right-0 w-1 bg-[#4a3f3c]" />}
          {state === "active" && <span className="absolute inset-x-0 bottom-0 h-[3px] border-r-4 border-[#a9524c] bg-[#db6860]" />}
          {state === "single" && <span className="absolute inset-x-[5px] bottom-0 h-[3px] bg-[#db6860]" />}
          {state === "stack" && <span className="absolute inset-x-[5px] bottom-0 h-[3px] border-r-10 border-[#a9524c] bg-[#db6860]" />}
        </button>
      ))}
      <div className="ml-auto flex">
        <button aria-label="Help" className="flex w-9 items-center justify-center pt-1">
          <Icon className="size-7" box="0 0 28 28">
            <circle cx="13" cy="13" r="12" fill="#1796d8" stroke="#fff" strokeWidth="2" />
            <text x="13" y="20" textAnchor="middle" fill="#fff" fontSize="19" fontWeight="700" fontFamily={sans}>?</text>
            <circle cx="22.500" cy="19" r="5.500" fill="#f2ab1d" />
            <path d="M22.500 15.500v1.500M22.500 18v4.500" stroke="#fff" strokeWidth="2" />
          </Icon>
        </button>
        {trayIcons.map(([name, width, icon]) => (
          <button key={name} aria-label={name} className={`flex items-center justify-center ${width}`}>{icon}</button>
        ))}
        <button className="flex w-[50px] flex-col items-center justify-center leading-[23px]"><span>ENG</span><span>US</span></button>
        <button className="flex w-[86px] flex-col items-center justify-center leading-[23px]"><span>8:09 AM</span><span>26/08/2020</span></button>
        <button aria-label="Notifications, 2 new" className="relative flex w-[63px] items-center justify-center">
          <Icon className="size-8" box="0 0 32 32">
            <path d="M2 3h20v16H11l-5 4v-4H2z" fill="#fff" />
            <path d="M6 7.500h12M6 11h12M6 14.500h8" stroke="#26251f" strokeWidth="1.300" />
            <circle cx="21.500" cy="22" r="9.500" fill="#35332f" stroke="#999" />
            <text x="21.500" y="27" textAnchor="middle" fill="#fff" fontSize="13" fontWeight="600" fontFamily={sans}>2</text>
          </Icon>
        </button>
        <div className="w-1.5 border-l border-[#777]" />
      </div>
    </footer>
  );
}

/* ---------- application frame ---------- */

const details: [string, string, string][] = [
  ["Reference", "MainVoltage", "w-[123px]"],
  ["Value", "9v", "w-[75px]"],
  ["Name", "VDC", "w-[78px]"],
  ["Library", "Simulation_SPICE", "w-[152px]"],
  ["Footprint", "<Unknown>", "w-[119px]"],
  ["Description", "Voltage source, DC", "w-[164px]"],
  ["Key words", "simulation", "flex-1"],
];

const status: [string, string][] = [
  ["Z 4.00", "w-[81px]"],
  ["X 128.27  Y 57.15", "w-[219px]"],
  ["dx 128.27  dy 57.15  dist 140.43", "w-[338px]"],
  ["grid 1.2700", "w-[250px]"],
  ["mm", "w-[61px]"],
  ["", "flex-1"],
];

export default function App() {
  return (
    <div className="relative flex min-h-screen flex-col overflow-hidden bg-[#f0f0f0] font-['Noto_Sans',sans-serif] text-[14px] leading-5 text-black">
      <header className="flex h-7 items-center bg-white pl-0.5 text-[#999]">
        <Icon className="size-5" box="0 0 20 20">
          <rect x=".5" y=".5" width="19" height="19" rx="2" fill="#f4f4f4" stroke="#ddd" />
          <path d="M10 4v5h8M10 9v10M1 13h5" stroke="#35a52b" />
          <path d="M8 0v4h3V0M12 7h6v2h-6zM6 10v7M6 13l4-3M6 14l4 3" stroke="#c01818" strokeWidth="1.200" />
        </Icon>
        <h1 className="flex-1 pl-[5px]">Eeschema — LDR LCD circuit.sch [/] — C:\Users\kajoo\OneDrive\Documents\Kicad\AUCRC sesh1\LDR LCD circuit</h1>
        <div className="flex items-center gap-[46px] pr-[26px]">
          <button aria-label="Minimize" className="h-px w-3 bg-[#999]" />
          <button aria-label="Restore">
            <Icon className="size-3" box="0 0 12 12"><path d="M.5 2.500h9v9h-9zM2.500 2.500v-2h9v9h-2" stroke="#999" /></Icon>
          </button>
          <button aria-label="Close"><CloseMark color="#999" /></button>
        </div>
      </header>
      <nav className="flex h-6 items-center gap-3.5 bg-white pt-0.5 pl-[7px] text-[#666]">
        {["File", "Edit", "View", "Place", "Inspect", "Tools", "Preferences", "Help"].map((m) => (
          <button key={m}>{m}</button>
        ))}
      </nav>
      <div role="toolbar" aria-label="Main" className="flex h-[38px] items-center gap-0.5 pt-0.5 pl-[5px]">
        {topTools.map((t, i) =>
          t ? (
            <button key={t[0]} aria-label={t[0]} className="flex size-8 items-center justify-center">{t[1]}</button>
          ) : (
            <span key={i} className="mx-[3px] h-6 w-px bg-[#b4b4b4]" />
          ),
        )}
      </div>

      <main className="flex flex-1">
        <div role="toolbar" aria-label="Display options" className="flex w-9 flex-col items-center gap-0.5 border-b border-[#d9d9d9] pt-[5px]">
          {leftTools.map(([name, icon, on]) => (
            <button key={name} aria-label={name} aria-pressed={on} className={`flex size-8 items-center justify-center ${on ? "border border-[#0078d7] bg-[#b2d6f4]" : ""}`}>
              {icon}
            </button>
          ))}
        </div>
        <div className="flex min-w-0 flex-1 flex-col">
          <div className="flex flex-1">
            <div className="relative flex-1 overflow-hidden bg-white">
              <svg className="absolute inset-0 size-full" aria-label="Schematic grid"><path d={gridPath} fill="#848484" /></svg>
            </div>
            <div className="flex w-[19px] flex-col">
              <ScrollButton dir="up" className="h-6" />
              <div className="flex flex-1 flex-col">
                <div className="grow-[292]" />
                <div className="h-[46px] bg-[#cdcdcd]" />
                <div className="grow-[465]" />
              </div>
              <ScrollButton dir="down" className="h-6" />
            </div>
          </div>
          <div className="mr-[19px] flex h-5">
            <ScrollButton dir="left" className="w-[22px]" />
            <div className="flex flex-1">
              <div className="grow-[704]" />
              <div className="mb-px w-[292px] bg-[#cdcdcd]" />
              <div className="grow-[787]" />
            </div>
            <ScrollButton dir="right" className="w-6" />
          </div>
        </div>
        <div role="toolbar" aria-label="Drawing tools" className="flex w-[38px] flex-col items-end gap-0.5 border-b border-[#d9d9d9] pt-[5px] pr-0.5">
          {rightTools.map(([name, icon]) => (
            <button key={name} aria-label={name} className={`flex size-8 items-center justify-center ${name === "Select" ? "border border-[#0078d7] bg-[#b2d6f4]" : ""}`}>
              {icon}
            </button>
          ))}
        </div>
      </main>

      <dl className="flex h-[42px] border-b border-[#d9d9d9] pt-0.5 pl-3.5">
        {details.map(([k, v, width]) => (
          <div key={k} className={width}>
            <dt>{k}</dt>
            <dd>{v}</dd>
          </div>
        ))}
      </dl>
      <div className="flex h-[27px] items-stretch pt-0.5">
        <div className="w-[753px] overflow-hidden pt-[3px] pl-0.5 whitespace-nowrap">
          File C:\Users\kajoo\OneDrive\Documents\Kicad\AUCRC sesh1\LDR LCD circuit\_autosave-LDR LCD circuit.sch s...
        </div>
        {status.map(([text, width], i) => (
          <div key={i} className={`border-l border-[#d4d4d4] pt-[3px] pl-1 whitespace-pre ${width}`}>{text}</div>
        ))}
      </div>
      <Taskbar />

      <SymbolProperties />
      <SpiceModelEditor />
    </div>
  );
}
